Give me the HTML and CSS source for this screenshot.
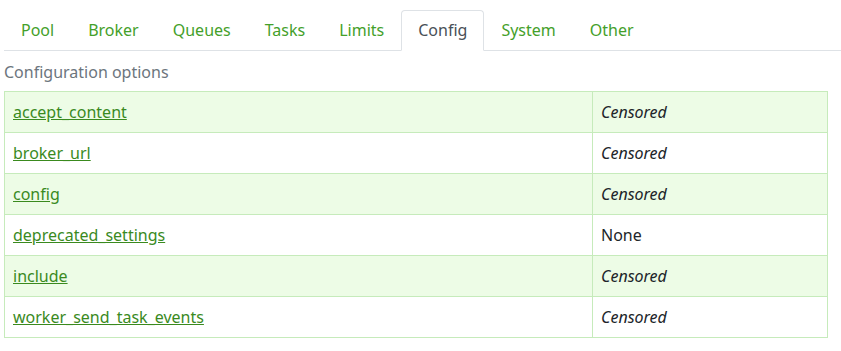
FILE: index.html
```html
<!DOCTYPE html>
<html lang="en">
<head>
  <meta charset="UTF-8">
  <title>Worker config</title>
  <link rel="stylesheet" href="styles.css">
</head>
<body>

  <ul class="nav-tabs">
    <li><a href="#">Pool</a></li>
    <li><a href="#">Broker</a></li>
    <li><a href="#">Queues</a></li>
    <li><a href="#">Tasks</a></li>
    <li><a href="#">Limits</a></li>
    <li><a href="#" class="active">Config</a></li>
    <li><a href="#">System</a></li>
    <li><a href="#">Other</a></li>
  </ul>

  <table class="config-table">
    <caption>Configuration options</caption>
    <tbody>
      <tr>
        <td class="name"><a href="#">accept_content</a></td>
        <td><em>Censored</em></td>
      </tr>
      <tr>
        <td class="name"><a href="#">broker_url</a></td>
        <td><em>Censored</em></td>
      </tr>
      <tr>
        <td class="name"><a href="#">config</a></td>
        <td><em>Censored</em></td>
      </tr>
      <tr>
        <td class="name"><a href="#">deprecated_settings</a></td>
        <td>None</td>
      </tr>
      <tr>
        <td class="name"><a href="#">include</a></td>
        <td><em>Censored</em></td>
      </tr>
      <tr>
        <td class="name"><a href="#">worker_send_task_events</a></td>
        <td><em>Censored</em></td>
      </tr>
    </tbody>
  </table>

</body>
</html>
```

FILE: styles.css
```css
body {
  font-family: "Noto Sans", "Open Sans", sans-serif;
  font-size: 16px;
  line-height: 24px;
  color: #212529;
  margin: 0;
  padding: 10px 0 0 4px;
  background-color: #fff;
}

.nav-tabs {
  display: flex;
  list-style: none;
  margin: 0;
  padding: 0;
  border-bottom: 1px solid #dee2e6;
}

.nav-tabs li {
  margin-bottom: -1px;
}

.nav-tabs a {
  display: block;
  padding: 7px 16px 8px;
  border: 1px solid transparent;
  border-radius: 4px 4px 0 0;
  color: #44a02a;
  text-decoration: none;
}

.nav-tabs a.active {
  color: #495057;
  background-color: #fff;
  border-color: #dee2e6 #dee2e6 #fff;
}

.config-table {
  width: 824px;
  border-collapse: collapse;
}

.config-table caption {
  caption-side: top;
  text-align: left;
  color: #6c757d;
  padding: 9px 0 7px;
}

.config-table td {
  border: 1px solid #c6ebbb;
  padding: 8px;
  text-align: left;
}

.config-table td.name {
  width: 571px;
}

.config-table tr:nth-child(odd) {
  background-color: #edfce6;
}

.config-table a {
  color: #3a8a1e;
  text-decoration: underline;
}
```
